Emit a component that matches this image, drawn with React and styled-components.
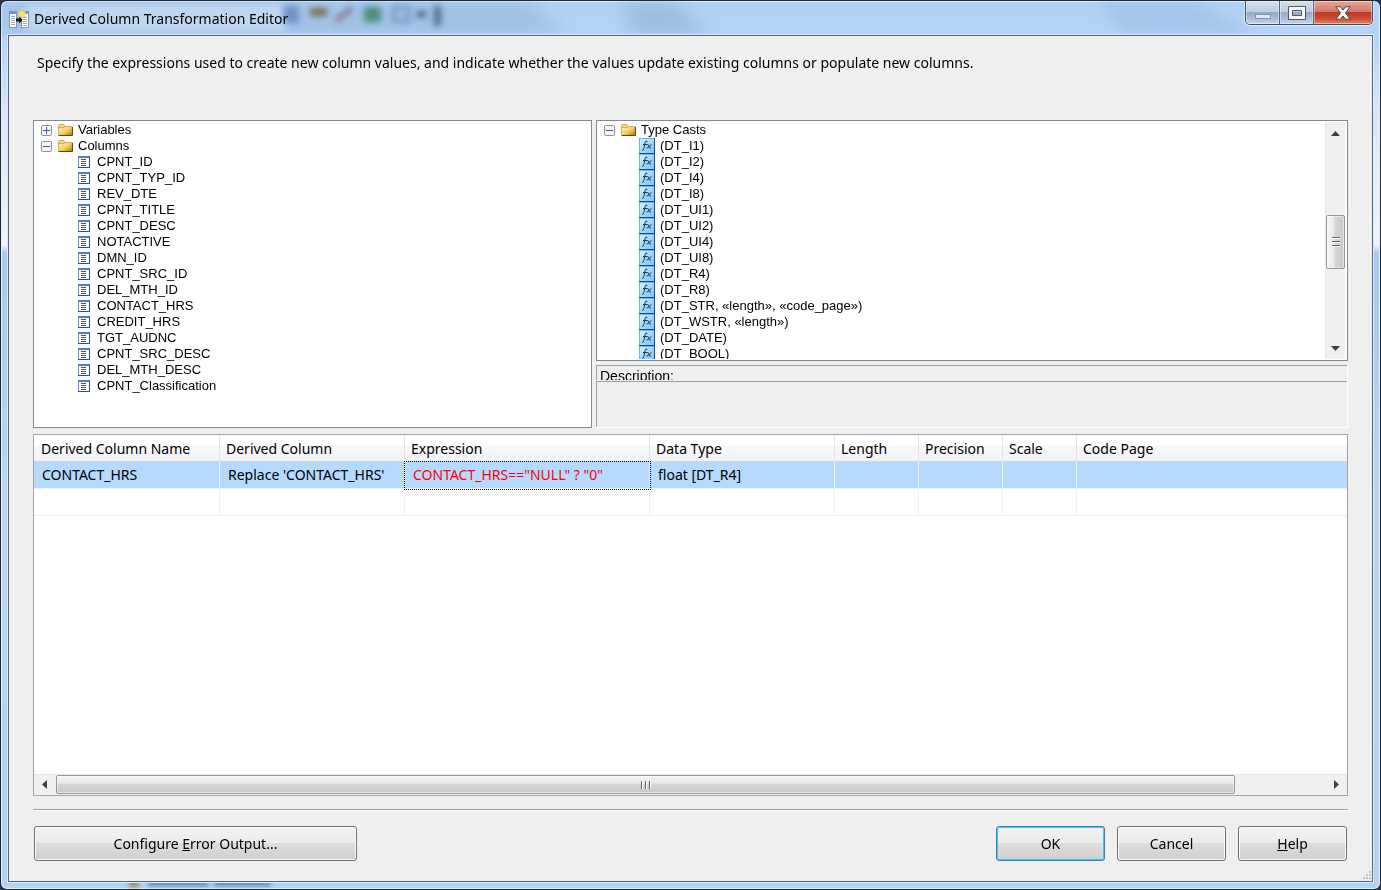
import React from 'react';
import styled, { createGlobalStyle } from 'styled-components';

const GlobalStyle = createGlobalStyle`
    * {
        box-sizing: border-box;
    }

    body {
        margin: 0;
        background-color: #2c3440;
        color: #000;
        font-family: 'Noto Sans', 'Open Sans', sans-serif;
        font-size: 14px;
        line-height: 20px;
    }

    button {
        font: inherit;
        color: inherit;
        padding: 0;
        cursor: default;
    }
`

const Window = styled.div`
    position: relative;
    display: flex;
    flex-direction: column;
    min-height: 100vh;
    padding: 0 7px 7px;
    border: 1px solid #1f2733;
    border-radius: 7px;
    background: linear-gradient(180deg, #b1d2f7 0, #b4d4f8 36px, #dbe9f8 120px, #eef5fc 244px, #a9c9ec 252px, #b9d7f5 500px, #b4d3f2 100%);
    box-shadow: inset 0 0 0 1px #e3f0fc;
    overflow: hidden;
`

const Glass = styled.svg`
    position: absolute;
    left: 0;
    top: ${props => props.$bottom ? 'auto' : '0'};
    bottom: ${props => props.$bottom ? '0' : 'auto'};
    width: 100%;
    height: ${props => props.$bottom ? '9px' : '35px'};
`

const TitleBar = styled.header`
    position: relative;
    display: flex;
    align-items: flex-start;
    justify-content: space-between;
    height: 34px;
`

const TitleText = styled.h1`
    display: flex;
    align-items: center;
    gap: 5px;
    height: 35px;
    margin: 0;
    padding-left: 1px;
    font-size: 14px;
    font-weight: normal;
`

const WindowButtons = styled.div`
    display: flex;
    height: 24px;
    border: 1px solid #3d4c62;
    border-top: none;
    border-radius: 0 0 5px 5px;
    overflow: hidden;
    box-shadow: 0 0 0 1px #dcebfb;
`

const WindowButton = styled.button`
    display: flex;
    align-items: center;
    justify-content: center;
    width: ${props => props.$close ? '58px' : '34px'};
    border: none;
    border-right: ${props => props.$close ? 'none' : '1px solid #53637a'};
    background: ${props => props.$close
        ? 'linear-gradient(180deg, #e6a797 0, #d4766a 46%, #bd3a26 50%, #c94a33 75%, #e0836a 100%)'
        : 'linear-gradient(180deg, #d3e0ee 0, #bccddf 46%, #93abc7 50%, #a5bcd6 75%, #c3d7ec 100%)'};
    box-shadow: inset 0 0 0 1px rgba(255, 255, 255, 0.45);
`

const Client = styled.main`
    position: relative;
    flex: 1;
    display: flex;
    flex-direction: column;
    padding: 17px 24px 20px;
    border: 1px solid #54657d;
    background-color: #efefef;
    box-shadow: 0 0 0 1px #dcebfb;
`

const Intro = styled.p`
    margin: 0 4px 47px;
`

const Panels = styled.div`
    display: grid;
    grid-template-columns: 559fr 752fr;
    gap: 4px;
    height: 308px;
`

const RightSide = styled.div`
    display: flex;
    flex-direction: column;
    gap: 4px;
    min-height: 0;
`

const TreePanel = styled.div`
    display: flex;
    height: ${props => props.$height || 'auto'};
    border: 1px solid #828790;
    background-color: #fff;
    overflow: hidden;
    padding: 1px 2px 1px 1px;
`

const Tree = styled.ul`
    flex: 1;
    margin: 0;
    padding: 0;
    list-style: none;
    overflow: hidden;
    font-family: 'Liberation Sans', Arial, sans-serif;
    font-size: 13px;
    line-height: 16px;
`

const TreeRow = styled.li`
    display: flex;
    align-items: center;
    gap: ${props => props.$gap || '5px'};
    height: 16px;
    padding-left: ${props => props.$indent || '6px'};
    white-space: nowrap;

    svg {
        flex: none;
    }
`

const Toggle = styled.button`
    display: flex;
    width: 11px;
    height: 11px;
    margin-right: 1px;
    border: none;
    background: none;
`

const Description = styled.section`
    flex: 1;
    display: flex;
    flex-direction: column;
    border-right: 1px solid #fff;
    border-bottom: 1px solid #fff;
`

const DescriptionLabel = styled.h2`
    height: 15px;
    margin: 0;
    padding: 1px 3px 0;
    border: 1px solid #a0a0a0;
    border-width: 1px 0 0 1px;
    font-family: 'Liberation Sans', Arial, sans-serif;
    font-size: 14px;
    font-weight: normal;
    line-height: 18px;
    overflow: hidden;
`

const DescriptionBody = styled.div`
    flex: 1;
    margin-top: 1px;
    border: 1px solid #a0a0a0;
    border-width: 1px 0 0 1px;
`

const GridPanel = styled.div`
    flex: 1;
    display: flex;
    flex-direction: column;
    justify-content: space-between;
    margin-top: 6px;
    border: 1px solid #a0a3a8;
    background-color: #fff;
`

const Table = styled.table`
    width: 100%;
    table-layout: fixed;
    border-collapse: separate;
    border-spacing: 0;
`

const Column = styled.col`
    width: ${props => props.$width};
`

const HeadCell = styled.th`
    height: 27px;
    padding: 1px 7px 0;
    border-right: 1px solid #e2e4e7;
    border-bottom: 1px solid #d5d5d5;
    background: linear-gradient(180deg, #fff 0, #fff 40%, #f7f8fa 41%, #f1f2f4 100%);
    font-weight: normal;
    text-align: left;
    white-space: nowrap;

    &:not(:first-child) {
        padding-left: 6px;
    }

    &:last-child {
        border-right: none;
    }
`

const Cell = styled.td`
    height: 27px;
    padding: 0 8px;
    border-right: 1px solid #f0f0f0;
    border-bottom: 1px solid #f0f0f0;
    background-color: ${props => props.$selected ? '#b5d9ff' : '#fff'};
    color: ${props => props.$error ? '#ff0000' : '#000'};
    outline: ${props => props.$error ? '1px dotted #000' : 'none'};
    white-space: nowrap;

    &:last-child {
        border-right: none;
    }
`

const ScrollBar = styled.div`
    display: flex;
    flex-direction: ${props => props.$vertical ? 'column' : 'row'};
    ${props => props.$vertical ? 'width: 20px;' : 'height: 21px;'}
    padding-bottom: ${props => props.$vertical ? '0' : '1px'};
    flex: none;
    background-color: #f0f0f0;
    border: 1px solid #e7e7e7;
    border-width: ${props => props.$vertical ? '0 0 0 1px' : '1px 0 0'};
`

const ScrollArrow = styled.button`
    display: flex;
    flex: none;
    align-items: center;
    justify-content: center;
    width: ${props => props.$vertical ? '100%' : '22px'};
    height: ${props => props.$vertical ? '22px' : '100%'};
    border: none;
    background: none;
`

const Track = styled.div`
    flex: 1;
    display: grid;
    ${props => props.$vertical ? 'grid-template-rows' : 'grid-template-columns'}: ${props => props.$split};
`

const Thumb = styled.div`
    display: flex;
    align-items: center;
    justify-content: center;
    border: 1px solid #979797;
    border-radius: 2px;
    background: linear-gradient(${props => props.$vertical ? '90deg' : '180deg'}, #f5f5f5 0, #e9e9eb 40%, #d4d4d6 50%, #c9c9cc 100%);
    box-shadow: inset 0 0 0 1px rgba(255, 255, 255, 0.5);
`

const Divider = styled.hr`
    width: 100%;
    margin: 13px 0 15px;
    border: none;
    border-top: 1px solid #a0a0a0;
    border-bottom: 1px solid #fff;
`

const Footer = styled.footer`
    display: flex;
    gap: 12px;
    padding: 0 1px;
`

const DialogButton = styled.button`
    width: ${props => props.$wide ? '323px' : '109px'};
    height: 35px;
    margin-right: ${props => props.$wide ? 'auto' : '0'};
    border: 1px solid ${props => props.$primary ? '#3c7fb1' : '#707070'};
    border-radius: 3px;
    background: linear-gradient(180deg, #f2f2f2 0, #ebebeb 48%, #dddddd 50%, #cfcfcf 100%);
    box-shadow: inset 0 0 0 1px ${props => props.$primary ? '#48c4ee' : '#fbfbfb'};
`

const Grip = styled.svg`
    position: absolute;
    right: 0;
    bottom: 0;
`

const columnNames = [
    'CPNT_ID', 'CPNT_TYP_ID', 'REV_DTE', 'CPNT_TITLE', 'CPNT_DESC', 'NOTACTIVE', 'DMN_ID', 'CPNT_SRC_ID',
    'DEL_MTH_ID', 'CONTACT_HRS', 'CREDIT_HRS', 'TGT_AUDNC', 'CPNT_SRC_DESC', 'DEL_MTH_DESC', 'CPNT_Classification',
];

const typeCasts = [
    '(DT_I1)', '(DT_I2)', '(DT_I4)', '(DT_I8)', '(DT_UI1)', '(DT_UI2)', '(DT_UI4)', '(DT_UI8)', '(DT_R4)', '(DT_R8)',
    '(DT_STR, «length», «code_page»)', '(DT_WSTR, «length»)', '(DT_DATE)', '(DT_BOOL)',
];

const gridColumns = [
    { title: 'Derived Column Name', width: '186px', value: 'CONTACT_HRS' },
    { title: 'Derived Column', width: '185px', value: "Replace 'CONTACT_HRS'" },
    { title: 'Expression', width: '245px', value: 'CONTACT_HRS=="NULL" ? "0"', error: true },
    { title: 'Data Type', width: '185px', value: 'float [DT_R4]' },
    { title: 'Length', width: '84px', value: '' },
    { title: 'Precision', width: '84px', value: '' },
    { title: 'Scale', width: '74px', value: '' },
    { title: 'Code Page', width: 'auto', value: '' },
];

const AppIcon = () => (
    <svg width='20' height='20' viewBox='0 0 20 20' aria-hidden='true'>
        <rect x='0.5' y='2.5' width='7' height='16' fill='#fff' stroke='#8a97ab' />
        <rect x='0' y='2' width='8' height='3' fill='#6d94df' />
        <path d='M2 7.5h4M2 9.5h4M2 11.5h4M2 13.5h4M2 15.5h4' stroke='#a3a9b4' />
        <rect x='12.5' y='2.5' width='7' height='16' fill='#fff' stroke='#8a97ab' />
        <rect x='12' y='2' width='8' height='3' fill='#6d94df' />
        <path d='M14 8.5h4M14 10.5h4M14 12.5h4M14 14.5h4M14 16.5h4' stroke='#a3a9b4' />
        <path d='M7 9.500h3v-2l3.500 3.500-3.500 3.500v-2H7z' fill='#111' />
        <path d='M13 0l1 2.500 2.500-1-1 2.500 2.500 1-2.500 1 1 2-2.500-.8-1 2-1-2-2.500.8 1-2-2-1 2-1-1-2.500 2.500 1z' fill='#f7e36a' stroke='#e8c93a' strokeWidth='0.500' />
    </svg>
)

const FolderIcon = () => (
    <svg width='15' height='14' viewBox='0 0 16 14' preserveAspectRatio='none' aria-hidden='true'>
        <defs>
            <linearGradient id='folder' x1='0' y1='0' x2='1' y2='1'>
                <stop offset='0' stopColor='#fff6c8' />
                <stop offset='0.55' stopColor='#f3cd5e' />
                <stop offset='1' stopColor='#a87508' />
            </linearGradient>
        </defs>
        <path d='M.500 3l1-1.500h4.500l1.500 1.500v3h-7z' fill='#f3d77c' stroke='#b8913a' strokeWidth='0.700' />
        <path d='M0.500 4.500h6l1-1h7.500v9h-14.500z' fill='url(#folder)' stroke='#b8913a' strokeWidth='0.700' />
        <path d='M1 12.500h14.500v-8.500' fill='none' stroke='#5c430c' />
    </svg>
)

const ColumnIcon = () => (
    <svg width='12' height='14' viewBox='0 0 12 14' aria-hidden='true'>
        <rect x='0.5' y='1.5' width='11' height='11' fill='#fff' stroke='#6a8ae0' />
        <path d='M0 2h12' stroke='#5679dc' strokeWidth='2' />
        <path d='M11.500 2v10.500H0' fill='none' stroke='#2b4aa0' />
        <path d='M3 4.500h5M3 6.500h5M3 8.500h5M3 10.500h5' stroke='#555' />
    </svg>
)

const FxIcon = () => (
    <svg width='16' height='16' viewBox='0 0 16 16' aria-hidden='true'>
        <defs>
            <linearGradient id='fx' x1='0' y1='0' x2='1' y2='1'>
                <stop offset='0' stopColor='#d5f1ff' />
                <stop offset='1' stopColor='#6fc2f5' />
            </linearGradient>
        </defs>
        <rect x='0.5' y='0.5' width='15' height='15' fill='url(#fx)' stroke='#6cb4e4' />
        <path d='M15.500 0v15.500H0' fill='none' stroke='#12508f' />
        <path d='M8.500 3.500c-1.500-1-2.200 0-2.500 1.500l-1.200 5.500c-.3 1.500-1 2-2 1.500M4 6.500h4' fill='none' stroke='#16334f' />
        <path d='M8 7c1.500-1 1.500 0 2 1.500s.8 2.200 2 1.200M12.500 6.800c-1.500-.3-3 3.500-5 3.300' fill='none' stroke='#16334f' />
    </svg>
)

const ToggleIcon = ({ open }) => (
    <svg width='11' height='11' viewBox='0 0 11 11' aria-hidden='true'>
        <rect x='0.5' y='0.5' width='10' height='10' rx='1' fill='#f4f4f4' stroke='#919191' />
        <path d={open ? 'M2 5.500h7' : 'M2 5.500h7M5.500 2v7'} stroke='#3d5fa8' />
    </svg>
)

const arrows = {
    up: 'M0 7l4.500-5L9 7z',
    down: 'M0 2l4.500 5L9 2z',
    left: 'M6 0L1 4.500 6 9z',
    right: 'M2 0l5 4.500L2 9z',
};

const Arrow = ({ direction }) => (
    <svg width='9' height='9' viewBox='0 0 9 9' aria-hidden='true'>
        <path d={arrows[direction]} fill='#404040' />
    </svg>
)

const ThumbLines = ({ vertical }) => (
    <svg width='10' height='10' viewBox='0 0 10 10' aria-hidden='true'>
        <path d={vertical ? 'M1 1.500h8M1 5.500h8M1 9.500h8' : 'M1.500 1v8M5.500 1v8M9.500 1v8'} stroke='#fff' />
        <path d={vertical ? 'M1 .5h8M1 4.500h8M1 8.500h8' : 'M.5 1v8M4.500 1v8M8.500 1v8'} stroke='#606060' />
    </svg>
)

const Folder = ({ name, open }) => (
    <TreeRow>
        <Toggle aria-label={name}><ToggleIcon open={open} /></Toggle>
        <FolderIcon />
        <span>{name}</span>
    </TreeRow>
)

const App = () => {
    return (
        <>
            <GlobalStyle />
            <Window>
                <Glass aria-hidden='true'>
                    <g style={{ filter: 'blur(8px)' }}>
                        <path d='M0 0h530l35 35H0z' fill='#8fb0d6' opacity='0.5' />
                        <path d='M620 0h55l35 35h-80z' fill='#8fb0d6' opacity='0.6' />
                        <path d='M1095 0h100l60 35h-130z' fill='#8fb0d6' opacity='0.4' />
                    </g>
                    <g style={{ filter: 'blur(3px)' }}>
                        <rect x='25' y='4' width='260' height='26' fill='#dbe8f6' opacity='0.55' />
                        <rect x='282' y='5' width='16' height='17' fill='#6f93c9' />
                        <rect x='309' y='7' width='17' height='8' fill='#756f49' />
                        <path d='M335 20l16-13' stroke='#8d7591' strokeWidth='5' />
                        <rect x='363' y='6' width='17' height='15' fill='#4b8f78' />
                        <rect x='393' y='6' width='14' height='14' fill='none' stroke='#6a8bb8' strokeWidth='3' />
                        <rect x='416' y='10' width='9' height='6' fill='#3e5678' />
                        <rect x='433' y='5' width='7' height='20' fill='#506a8f' />
                    </g>
                </Glass>
                <Glass $bottom aria-hidden='true'>
                    <g style={{ filter: 'blur(2px)' }}>
                        <rect x='128' y='0' width='10' height='7' fill='#94915a' />
                        <rect x='147' y='1' width='60' height='5' fill='#6685aa' />
                        <rect x='213' y='1' width='57' height='5' fill='#6685aa' />
                    </g>
                </Glass>
                <TitleBar>
                    <TitleText>
                        <AppIcon />
                        Derived Column Transformation Editor
                    </TitleText>
                    <WindowButtons>
                        <WindowButton aria-label='Minimize'>
                            <svg width='18' height='14' viewBox='0 0 18 14'>
                                <rect x='1.5' y='8.5' width='15' height='4' fill='#e3e8ee' stroke='#8392a6' />
                            </svg>
                        </WindowButton>
                        <WindowButton aria-label='Maximize'>
                            <svg width='18' height='14' viewBox='0 0 18 14'>
                                <path fillRule='evenodd' d='M.5.5h17v13H.5zM4.500 4.500v5h9v-5z' fill='#f4f4f4' stroke='#4b5868' />
                            </svg>
                        </WindowButton>
                        <WindowButton $close aria-label='Close'>
                            <svg width='16' height='14' viewBox='0 0 16 14'>
                                <path d='M.8.8h4.700L8 4 10.500.8h4.700L10.500 7l4.700 6.200h-4.700L8 10l-2.500 3.200H.8L5.500 7z' fill='#f6f6f6' stroke='#57423f' />
                            </svg>
                        </WindowButton>
                    </WindowButtons>
                </TitleBar>
                <Client>
                    <Intro>
                        Specify the expressions used to create new column values, and indicate whether the values update existing columns or populate new columns.
                    </Intro>
                    <Panels>
                        <TreePanel>
                            <Tree>
                                <Folder name='Variables' />
                                <Folder name='Columns' open />
                                {columnNames.map(name => (
                                    <TreeRow key={name} $indent='43px' $gap='7px'>
                                        <ColumnIcon />
                                        <span>{name}</span>
                                    </TreeRow>
                                ))}
                            </Tree>
                        </TreePanel>
                        <RightSide>
                            <TreePanel $height='241px'>
                                <Tree>
                                    <Folder name='Type Casts' open />
                                    {typeCasts.map(name => (
                                        <TreeRow key={name} $indent='41px'>
                                            <FxIcon />
                                            <span>{name}</span>
                                        </TreeRow>
                                    ))}
                                </Tree>
                                <ScrollBar $vertical>
                                    <ScrollArrow $vertical aria-label='Scroll up'><Arrow direction='up' /></ScrollArrow>
                                    <Track $vertical $split='71fr 54px 68fr'>
                                        <span />
                                        <Thumb $vertical><ThumbLines vertical /></Thumb>
                                    </Track>
                                    <ScrollArrow $vertical aria-label='Scroll down'><Arrow direction='down' /></ScrollArrow>
                                </ScrollBar>
                            </TreePanel>
                            <Description>
                                <DescriptionLabel>Description:</DescriptionLabel>
                                <DescriptionBody />
                            </Description>
                        </RightSide>
                    </Panels>
                    <GridPanel>
                        <Table>
                            <colgroup>
                                {gridColumns.map(column => <Column key={column.title} $width={column.width} />)}
                            </colgroup>
                            <thead>
                                <tr>
                                    {gridColumns.map(column => <HeadCell key={column.title}>{column.title}</HeadCell>)}
                                </tr>
                            </thead>
                            <tbody>
                                <tr>
                                    {gridColumns.map(column => (
                                        <Cell key={column.title} $selected $error={column.error}>{column.value}</Cell>
                                    ))}
                                </tr>
                                <tr>
                                    {gridColumns.map(column => <Cell key={column.title} />)}
                                </tr>
                            </tbody>
                        </Table>
                        <ScrollBar>
                            <ScrollArrow aria-label='Scroll left'><Arrow direction='left' /></ScrollArrow>
                            <Track $split='1179fr 90fr'>
                                <Thumb><ThumbLines /></Thumb>
                            </Track>
                            <ScrollArrow aria-label='Scroll right'><Arrow direction='right' /></ScrollArrow>
                        </ScrollBar>
                    </GridPanel>
                    <Divider />
                    <Footer>
                        <DialogButton $wide>Configure <u>E</u>rror Output...</DialogButton>
                        <DialogButton $primary>OK</DialogButton>
                        <DialogButton>Cancel</DialogButton>
                        <DialogButton><u>H</u>elp</DialogButton>
                    </Footer>
                    <Grip width='12' height='12' viewBox='0 0 12 12' aria-hidden='true'>
                        <path d='M9 2h2v2H9zM6 5h2v2H6zM9 5h2v2H9zM3 8h2v2H3zM6 8h2v2H6zM9 8h2v2H9z' fill='#c4c4c4' />
                    </Grip>
                </Client>
            </Window>
        </>
    );
};

export default App;
